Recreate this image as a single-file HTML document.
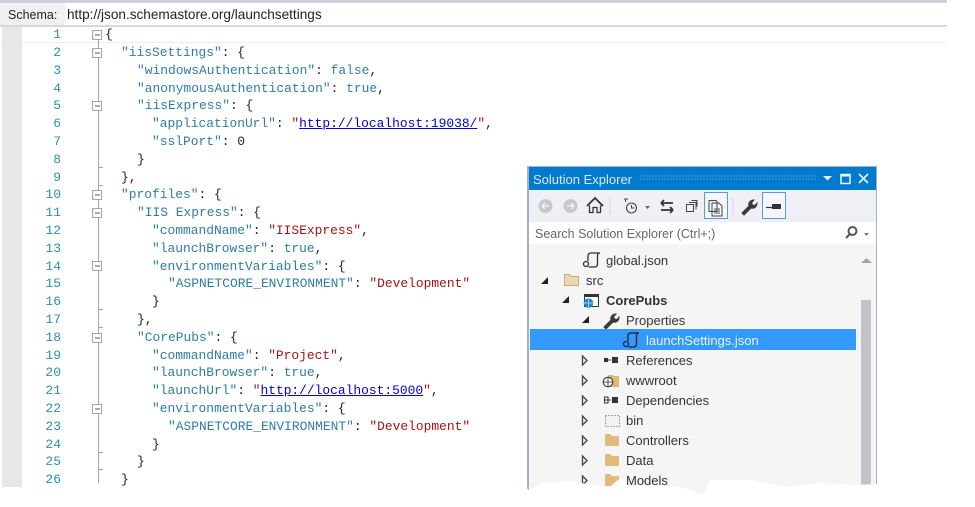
<!DOCTYPE html>
<html><head><meta charset="utf-8">
<style>
html,body{margin:0;padding:0;background:#fff}
#p{position:relative;width:975px;height:507px;overflow:hidden;background:#fff;font-family:"Liberation Sans",sans-serif;filter:blur(.35px)}
.a{position:absolute}
.l{position:absolute;margin-top:1px;font:12.92px/18px "Liberation Mono",monospace;white-space:pre;color:#222}
.n{position:absolute;margin-top:1px;width:61px;left:0;text-align:right;font:13px/18px "Liberation Mono",monospace;color:#2b91af}
.k{color:#2e7da6}.s{color:#a31515}.u{color:#0000d8;text-decoration:underline}
.t{position:absolute;margin-top:1px;font-size:13px;line-height:20px;color:#333;white-space:nowrap}
svg{position:absolute;overflow:visible}
</style></head><body><div id="p">
<div class="a" style="left:0;top:3px;width:65px;height:22px;background:#f0f0f0"></div>
<div class="a" style="left:0;top:25px;width:947px;height:2px;background:#d8d8d8"></div>
<div class="a" style="left:0;top:0;width:947px;height:3px;background:#cdd0de"></div>
<div class="a" style="left:0;top:42px;width:947px;height:1px;background:#eeeeee"></div>
<div class="a" style="left:2px;top:27px;width:20px;height:460px;background:#e6e7e8"></div>
<div class="a" style="left:8px;top:6px;font-size:12.5px;line-height:18px;color:#222">Schema:</div>
<div class="a" style="left:67px;top:6px;font-size:13.6px;line-height:18px;color:#222">http://json.schemastore.org/launchsettings</div>

<div class="n" style="top:25px">1</div><div class="n" style="top:43px">2</div><div class="n" style="top:61px">3</div><div class="n" style="top:79px">4</div><div class="n" style="top:96px">5</div><div class="n" style="top:114px">6</div><div class="n" style="top:132px">7</div><div class="n" style="top:150px">8</div><div class="n" style="top:168px">9</div><div class="n" style="top:185px">10</div><div class="n" style="top:203px">11</div><div class="n" style="top:221px">12</div><div class="n" style="top:239px">13</div><div class="n" style="top:257px">14</div><div class="n" style="top:274px">15</div><div class="n" style="top:292px">16</div><div class="n" style="top:310px">17</div><div class="n" style="top:328px">18</div><div class="n" style="top:346px">19</div><div class="n" style="top:363px">20</div><div class="n" style="top:381px">21</div><div class="n" style="top:399px">22</div><div class="n" style="top:417px">23</div><div class="n" style="top:435px">24</div><div class="n" style="top:452px">25</div><div class="n" style="top:470px">26</div>

<svg style="left:0;top:0" width="120" height="490">
<g stroke="#a5a5a5" fill="none">
<path d="M98.500 40V483M98.500 167.500H103M98.500 185.500H103M98.500 309.500H103M98.500 327.500H103M98.500 452.500H103M98.500 469.500H103"/>
<g fill="#fff">
<rect x="92.500" y="30.500" width="9" height="9"/><rect x="92.500" y="48.500" width="9" height="9"/><rect x="92.500" y="101.500" width="9" height="9"/><rect x="92.500" y="190.500" width="9" height="9"/><rect x="92.500" y="208.500" width="9" height="9"/><rect x="92.500" y="261.500" width="9" height="9"/><rect x="92.500" y="333.500" width="9" height="9"/><rect x="92.500" y="404.500" width="9" height="9"/>
</g>
<path stroke="#555" d="M95 35h5M95 53h5M95 106h5M95 195h5M95 213h5M95 266h5M95 338h5M95 409h5"/>
</g></svg>

<div class="l" style="left:105px;top:25px">{</div>
<div class="l" style="left:121px;top:43px"><span class="k">"iisSettings"</span>: {</div>
<div class="l" style="left:137px;top:61px"><span class="k">"windowsAuthentication"</span>: <span class="k">false</span>,</div>
<div class="l" style="left:137px;top:79px"><span class="k">"anonymousAuthentication"</span>: <span class="k">true</span>,</div>
<div class="l" style="left:137px;top:96px"><span class="k">"iisExpress"</span>: {</div>
<div class="l" style="left:152px;top:114px"><span class="k">"applicationUrl"</span>: <span class="s">"</span><span class="u">http://localhost:19038/</span><span class="s">"</span>,</div>
<div class="l" style="left:152px;top:132px"><span class="k">"sslPort"</span>: 0</div>
<div class="l" style="left:137px;top:150px">}</div>
<div class="l" style="left:121px;top:168px">},</div>
<div class="l" style="left:121px;top:185px"><span class="k">"profiles"</span>: {</div>
<div class="l" style="left:137px;top:203px"><span class="k">"IIS Express"</span>: {</div>
<div class="l" style="left:152px;top:221px"><span class="k">"commandName"</span>: <span class="s">"IISExpress"</span>,</div>
<div class="l" style="left:152px;top:239px"><span class="k">"launchBrowser"</span>: <span class="k">true</span>,</div>
<div class="l" style="left:152px;top:257px"><span class="k">"environmentVariables"</span>: {</div>
<div class="l" style="left:168px;top:274px"><span class="k">"ASPNETCORE_ENVIRONMENT"</span>: <span class="s">"Development"</span></div>
<div class="l" style="left:152px;top:292px">}</div>
<div class="l" style="left:137px;top:310px">},</div>
<div class="l" style="left:137px;top:328px"><span class="k">"CorePubs"</span>: {</div>
<div class="l" style="left:152px;top:346px"><span class="k">"commandName"</span>: <span class="s">"Project"</span>,</div>
<div class="l" style="left:152px;top:363px"><span class="k">"launchBrowser"</span>: <span class="k">true</span>,</div>
<div class="l" style="left:152px;top:381px"><span class="k">"launchUrl"</span>: <span class="s">"</span><span class="u">http://localhost:5000</span><span class="s">"</span>,</div>
<div class="l" style="left:152px;top:399px"><span class="k">"environmentVariables"</span>: {</div>
<div class="l" style="left:168px;top:417px"><span class="k">"ASPNETCORE_ENVIRONMENT"</span>: <span class="s">"Development"</span></div>
<div class="l" style="left:152px;top:435px">}</div>
<div class="l" style="left:137px;top:452px">}</div>
<div class="l" style="left:121px;top:470px">}</div>

<!-- Solution Explorer -->
<div class="a" style="left:527px;top:166px;width:350px;height:325px;background:#9fb2cc"></div>
<div class="a" style="left:529px;top:167px;width:347px;height:23px;background:#007acc"></div>
<div class="a" style="left:529px;top:190px;width:347px;height:32px;background:#eef0f5"></div>
<div class="a" style="left:529px;top:222px;width:347px;height:22px;background:#fff"></div>
<div class="a" style="left:529px;top:244px;width:347px;height:250px;background:#f5f5f5"></div>
<div class="a" style="left:533px;top:171px;font-size:13px;line-height:18px;color:#dcecf8">Solution Explorer</div>
<div class="a" style="left:640px;top:175px;width:176px;height:6px;background-image:radial-gradient(circle at 1px 1px,#3d9ad8 0.7px,transparent 1px);background-size:3px 3px"></div>
<svg style="left:0;top:0" width="975" height="507">
<path d="M823 176h9l-4.500 4.500z" fill="#e8f2fa"/>
<rect x="841" y="174.500" width="9" height="9" fill="none" stroke="#f0f6fb" stroke-width="1.500"/><path d="M841 175.500h9" stroke="#f0f6fb" stroke-width="2"/>
<path d="M859 174l9 9M868 174l-9 9" stroke="#f0f6fb" stroke-width="1.600"/>
<!-- toolbar -->
<circle cx="545.500" cy="206" r="7" fill="#c8c8c8"/><path d="M549 206h-6M545 203l-3 3 3 3" stroke="#eef0f5" stroke-width="1.500" fill="none"/>
<circle cx="570.500" cy="206" r="7" fill="#c8c8c8"/><path d="M567 206h6M571 203l3 3-3 3" stroke="#eef0f5" stroke-width="1.500" fill="none"/>
<path d="M587 206l8-8 8 8" fill="none" stroke="#333" stroke-width="1.800"/><path d="M589.500 205.500v7h3.500v-5h4v5h3.500v-7" fill="#f7f4ea" stroke="#333" stroke-width="1.300"/>
<path d="M610 197v18" stroke="#d8d9df"/>
<circle cx="631.500" cy="208" r="5" fill="none" stroke="#444" stroke-width="1.100"/><path d="M631.500 205v3h3M624 199h4M625.500 199v3" stroke="#444" fill="none"/>
<path d="M645 206h5l-2.500 3z" fill="#666"/>
<path d="M661 203h12M661 203l3-3M661 203l3 3M673 210h-12M673 210l-3-3M673 210l-3 3" stroke="#333" stroke-width="1.700" fill="none"/>
<path d="M686.500 204.500h7v7h-7zM689 202.500h7v7M691.500 200.500h5.500v6" fill="#eef0f5" stroke="#444"/>
<rect x="704.500" y="192.500" width="23" height="26" fill="#f4f6fa" stroke="#5b9bd5"/>
<path d="M709 200.500h7l1 1v10h-8zM712 203h7l3 3v10h-10z" fill="#f4f6fa" stroke="#444"/><path d="M714 209h6M714 211h6M714 213h6" stroke="#555"/>
<path d="M733 197v18" stroke="#d8d9df"/>
<path d="M742 213l7-7c-1-3 1-6 5-6l-2.500 3 1 2 2.500.5 2-2.500c0 4-3 6-6 5l-7 7z" fill="#3b3b3b" stroke="#3b3b3b"/>
<rect x="762.500" y="192.500" width="23" height="26" fill="#f4f6fa" stroke="#5b9bd5"/>
<path d="M766 207.500h6" stroke="#333" stroke-width="1.200"/><rect x="772" y="204" width="9" height="5" fill="#333"/>
<!-- search -->
<circle cx="852.500" cy="231" r="4" fill="none" stroke="#555" stroke-width="2"/><path d="M850 234l-4 4" stroke="#555" stroke-width="2.200"/>
<path d="M864 233h5l-2.500 3z" fill="#777"/>
<!-- scrollbar -->
<path d="M861 263l5.500-5 5.500 5z" fill="#a6a6a6"/>
<rect x="861" y="300" width="10" height="190" fill="#c2c3c9"/>
<!-- expand arrows -->
<g fill="#222"><path d="M541 284h7v-7zM562 303h7v-7zM582 323h7v-7z"/></g>
<g fill="#f5f5f5" stroke="#444" stroke-width="1.300">
<path d="M582.500 356v9l4.500-4.500zM582.500 376v9l4.500-4.500zM582.500 396v9l4.500-4.500zM582.500 416v9l4.500-4.500zM582.500 436v9l4.500-4.500zM582.500 456v9l4.500-4.500zM582.500 476v9l4.500-4.500z"/>
</g>
<!-- global.json script icon -->
<g fill="none" stroke="#333" stroke-width="1.300">
<path d="M588 261v-5c0-2 1-3 3-3h9M600 253c-2 0-2.500 1-2.500 3v8c0 2-1 3-3 3h-6"/><circle cx="586" cy="264" r="2.500"/>
</g>
<!-- src folder -->
<path d="M564.500 274.500h5l2 2h7v9h-14z" fill="#e8d9b6" stroke="#c9ab6c"/>
<!-- CorePubs -->
<rect x="584.500" y="294.500" width="14" height="12" fill="#fff" stroke="#333"/><rect x="584" y="294" width="15" height="3" fill="#333"/>
<circle cx="588.500" cy="303" r="4.800" fill="#1f8ad0"/><path d="M584 303h9M588.500 298.500v9" stroke="#bfe0f5" stroke-width=".7"/>
<!-- properties wrench -->
<path d="M604 327l7-7c-1-3 1-6 5-6l-2.500 3 1 2 2.500.5 2-2.500c0 4-3 6-6 5l-7 7z" fill="#3b3b3b" stroke="#3b3b3b"/>
<!-- references -->
<rect x="604" y="358" width="4" height="4" fill="#333"/><path d="M608 360h3" stroke="#333"/><rect x="612" y="357" width="6" height="6" fill="#333"/>
<!-- wwwroot -->
<path d="M608 375h5l1 1h5v11h-11z" fill="#dcb67a"/>
<circle cx="608" cy="382" r="4.800" fill="#f5f5f5" stroke="#333"/><path d="M603 382h10M608 377v10" stroke="#333" stroke-width=".8"/>
<!-- dependencies -->
<rect x="604.500" y="397" width="3.500" height="6" fill="#f5f5f5" stroke="#333"/><path d="M604 400h4M608 400h3" stroke="#333"/><rect x="612" y="397" width="6" height="6" fill="#333"/>
<!-- bin -->
<rect x="605.500" y="415.500" width="14" height="11" fill="#f3f3f3" stroke="#555" stroke-dasharray="1 2"/>
<!-- folders -->
<path d="M605 434h5l2 2h7v10h-14z" fill="#dfbb7c"/>
<path d="M605 454h5l2 2h7v10h-14z" fill="#dfbb7c"/>
<path d="M605 474h5l2 2h7v10h-14z" fill="#dfbb7c"/>
</svg>
<div class="a" style="left:535px;top:226px;font-size:12.5px;line-height:16px;color:#666">Search Solution Explorer (Ctrl+;)</div>
<div class="a" style="left:530px;top:329px;width:326px;height:21px;background:#3399ff"></div>
<svg style="left:0;top:0" width="975" height="507"><g fill="none" stroke="#222" stroke-width="1.300"><path d="M628 341v-5c0-2 1-3 3-3h8M639 333c-2 0-2.500 1-2.500 3v8c0 2-1 3-3 3h-5"/><circle cx="626" cy="344" r="2.500"/></g></svg>
<div class="t" style="left:606px;top:250px">global.json</div>
<div class="t" style="left:586px;top:270px">src</div>
<div class="t" style="left:606px;top:290px;font-weight:bold">CorePubs</div>
<div class="t" style="left:626px;top:310px">Properties</div>
<div class="t" style="left:646px;top:330px;color:#e8f3ff">launchSettings.json</div>
<div class="t" style="left:626px;top:350px">References</div>
<div class="t" style="left:626px;top:370px">wwwroot</div>
<div class="t" style="left:626px;top:390px">Dependencies</div>
<div class="t" style="left:626px;top:410px">bin</div>
<div class="t" style="left:626px;top:430px">Controllers</div>
<div class="t" style="left:626px;top:450px">Data</div>
<div class="t" style="left:626px;top:470px">Models</div>

<!-- torn edge -->
<svg style="left:0;top:0" width="975" height="507">
<path d="M0 487H525L529 490 543 483 570 481 587 484 610 487 613 484 618 480 622 479 626 485 670 486 693 490 702 498 710 480 753 480 787 487 820 483 853 485 883 484 975 487V507H0Z" fill="#fff"/>
</svg>
</div></body></html>
